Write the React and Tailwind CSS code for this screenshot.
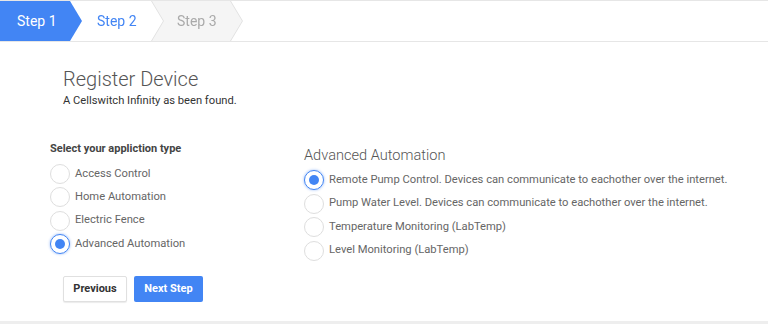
import React, { useState } from "react";

const apps = ["Access Control", "Home Automation", "Electric Fence", "Advanced Automation"];
const features = [
  "Remote Pump Control. Devices can communicate to eachother over the internet.",
  "Pump Water Level. Devices can communicate to eachother over the internet.",
  "Temperature Monitoring (LabTemp)",
  "Level Monitoring (LabTemp)",
];

function Radio({ checked }) {
  return checked ? (
    <span className="flex h-[20px] w-[20px] shrink-0 items-center justify-center rounded-full border-[1.5px] border-[#4285f4] bg-white shadow-[0_0_2px_1px_rgba(66,133,244,0.25)]">
      <span className="h-[10px] w-[10px] rounded-full bg-[#4285f4]" />
    </span>
  ) : (
    <span className="h-[20px] w-[20px] shrink-0 rounded-full border border-[#dedede] bg-white" />
  );
}

function Option({ label, checked, onClick }) {
  return (
    <button onClick={onClick} className="flex h-[23.4px] items-center gap-[5px] text-left text-[11.2px] text-[#666]">
      <Radio checked={checked} />
      <span>{label}</span>
    </button>
  );
}

export default function App() {
  const [app, setApp] = useState(3);
  const [feature, setFeature] = useState(0);

  return (
    <div className="flex h-[324px] w-[768px] flex-col overflow-hidden bg-white font-['Roboto',sans-serif]">
      {/* steps */}
      <div className="flex h-[42px] shrink-0 border-y border-[#e6e6e6] text-[14px]">
        <div className="z-30 flex w-[82px] items-center bg-[#4285f4] pl-[17px] text-white [clip-path:polygon(0_0,70px_0,100%_50%,70px_100%,0_100%)]">
          Step 1
        </div>
        <div className="z-20 -ml-[12px] [filter:drop-shadow(1px_0_0_#e2e2e2)]">
          <div className="flex h-full w-[93px] items-center bg-white pl-[27px] text-[#4285f4] [clip-path:polygon(0_0,calc(100%-12px)_0,100%_50%,calc(100%-12px)_100%,0_100%,12px_50%)]">
            Step 2
          </div>
        </div>
        <div className="z-10 -ml-[12px] [filter:drop-shadow(1px_0_0_#e2e2e2)]">
          <div className="flex h-full w-[91px] items-center bg-[#f5f5f5] pl-[26px] text-[#aaa] [clip-path:polygon(0_0,calc(100%-12px)_0,100%_50%,calc(100%-12px)_100%,0_100%,12px_50%)]">
            Step 3
          </div>
        </div>
      </div>

      <div className="flex-1">
        <div className="pl-[63px] pt-[25px]">
          <h1 className="text-[20px] font-light leading-[24px] text-[#555]">Register Device</h1>
          <p className="mt-[2px] text-[11.2px] text-[#333]">A Cellswitch Infinity as been found.</p>
        </div>

        <div className="flex">
          <div className="w-[304px] shrink-0 pl-[50px] pt-[31px]">
            <p className="mb-[5px] text-[11px] font-bold text-[#444]">Select your appliction type</p>
            <div className="flex flex-col">
              {apps.map((a, i) => (
                <Option key={a} label={a} checked={app === i} onClick={() => setApp(i)} />
              ))}
            </div>
            <div className="mt-[20px] flex gap-[7px] pl-[13px]">
              <button className="h-[26px] w-[64px] rounded-[2px] border border-[#e0e0e0] bg-white text-[11px] font-bold text-[#333] shadow-[0_1px_1px_rgba(0,0,0,0.08)]">
                Previous
              </button>
              <button className="h-[26px] w-[69px] rounded-[2px] bg-[#4285f4] text-[11px] font-bold text-white">
                Next Step
              </button>
            </div>
          </div>
          <div className="pt-[36px]">
            <h2 className="mb-[5px] text-[14.6px] font-light leading-[18px] text-[#555]">Advanced Automation</h2>
            <div className="flex flex-col">
              {features.map((f, i) => (
                <Option key={f} label={f} checked={feature === i} onClick={() => setFeature(i)} />
              ))}
            </div>
          </div>
        </div>
      </div>

      <div className="h-[3px] shrink-0 bg-[#eeeeee]" />
    </div>
  );
}
